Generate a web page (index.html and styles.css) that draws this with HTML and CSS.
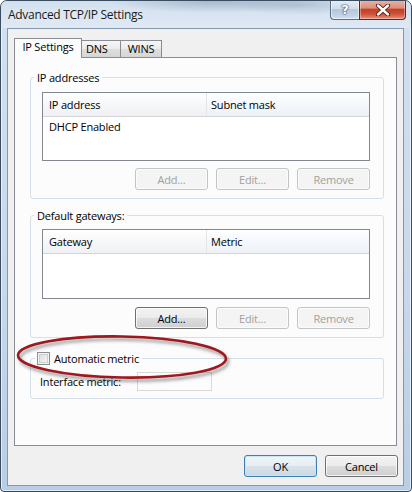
FILE: index.html
```html
<!DOCTYPE html>
<html>
<head>
<meta charset="utf-8">
<title>Advanced TCP/IP Settings</title>
<link rel="stylesheet" href="styles.css">
</head>
<body>
<div class="window">
  <div class="titlebar">
    <div class="title">Advanced TCP/IP Settings</div>
    <div class="caption-buttons">
      <div class="cap cap-help">?</div>
      <div class="cap cap-close">
        <svg class="close-icon" width="16" height="12" viewBox="0 0 16 12">
          <path d="M3 1.5 L13 10.5 M13 1.5 L3 10.5" stroke="#4b1812" stroke-width="4.2" stroke-linecap="round" fill="none"/>
          <path d="M3 1.5 L13 10.5 M13 1.5 L3 10.5" stroke="#ffffff" stroke-width="2.4" stroke-linecap="round" fill="none"/>
        </svg>
      </div>
    </div>
  </div>
  <div class="client">
    <div class="tabs">
      <div class="tab tab-selected">IP Settings</div>
      <div class="tab tab-dns">DNS</div>
      <div class="tab tab-wins">WINS</div>
    </div>
    <div class="panel">
      <div class="group group-ip">
        <div class="group-title">IP addresses</div>
        <div class="listview lv-ip">
          <div class="lv-header">
            <div class="lv-col lv-col1">IP address</div>
            <div class="lv-col lv-col2">Subnet mask</div>
          </div>
          <div class="lv-row">DHCP Enabled</div>
        </div>
        <div class="btn-row">
          <button class="btn" disabled>Add...</button>
          <button class="btn" disabled>Edit...</button>
          <button class="btn" disabled>Remove</button>
        </div>
      </div>
      <div class="group group-gw">
        <div class="group-title">Default gateways:</div>
        <div class="listview lv-gw">
          <div class="lv-header">
            <div class="lv-col lv-col1">Gateway</div>
            <div class="lv-col lv-col2">Metric</div>
          </div>
        </div>
        <div class="btn-row">
          <button class="btn">Add...</button>
          <button class="btn" disabled>Edit...</button>
          <button class="btn" disabled>Remove</button>
        </div>
      </div>
      <div class="group group-metric">
        <div class="group-title title-check">
          <span class="checkbox"></span>
          <span>Automatic metric</span>
        </div>
        <div class="metric-row">
          <span class="metric-label">Interface metric:</span>
          <span class="textbox"></span>
        </div>
      </div>
    </div>
    <div class="footer">
      <button class="btn btn-default">OK</button>
      <button class="btn">Cancel</button>
    </div>
  </div>
  <svg class="annotation" width="412" height="492" viewBox="0 0 412 492">
    <defs>
      <filter id="soft" x="-10%" y="-50%" width="120%" height="200%">
        <feGaussianBlur stdDeviation="1.4"/>
      </filter>
    </defs>
    <ellipse cx="124" cy="360" rx="104" ry="20.5" transform="rotate(1 124 360)" fill="none" stroke="rgba(60,60,60,0.45)" stroke-width="3" filter="url(#soft)"/>
    <ellipse cx="122" cy="357" rx="104" ry="20.5" transform="rotate(1 122 357)" fill="none" stroke="#a0171d" stroke-width="2.6"/>
  </svg>
</div>
</body>
</html>
```

FILE: styles.css
```css
html, body {
  margin: 0;
  padding: 0;
}

body {
  width: 412px;
  height: 492px;
  overflow: hidden;
  background: #ffffff;
  font-family: "Open Sans", "Noto Sans", sans-serif;
  font-size: 11px;
  letter-spacing: -0.2px;
  color: #000000;
}

.window {
  box-sizing: border-box;
  width: 412px;
  height: 492px;
  position: relative;
  display: flex;
  flex-direction: column;
  border: 1px solid #3a4c60;
  border-radius: 7px 7px 4px 4px;
  background: linear-gradient(180deg, #d3e1ef 0%, #c6d8eb 60%, #b8cee6 100%);
  box-shadow: inset 0 0 0 1px rgba(255, 255, 255, 0.6);
  overflow: hidden;
}

/* ---------- title bar ---------- */
.titlebar {
  height: 27px;
  flex: none;
  display: flex;
  justify-content: space-between;
  align-items: flex-start;
  background:
    radial-gradient(ellipse 110px 12px at 215px 0px, rgba(110, 135, 165, 0.45), rgba(110, 135, 165, 0)),
    radial-gradient(ellipse 70px 10px at 300px 4px, rgba(120, 145, 175, 0.35), rgba(120, 145, 175, 0)),
    linear-gradient(180deg, #d2e0ee 0%, #dfe9f4 100%);
  border-radius: 6px 6px 0 0;
}

.title {
  padding: 6px 0 0 7px;
  font-size: 12px;
  letter-spacing: -0.3px;
  line-height: 16px;
  color: #1a1a1a;
  text-shadow: 0 0 8px rgba(255, 255, 255, 0.9);
}

.caption-buttons {
  display: flex;
  margin: -1px 5px 0 0;
}

.cap {
  box-sizing: border-box;
  height: 20px;
  display: flex;
  align-items: center;
  justify-content: center;
}

.cap-help {
  width: 29px;
  border: 1px solid #5a6f86;
  border-top: none;
  border-right: none;
  border-radius: 0 0 0 4px;
  background: linear-gradient(180deg, #e6edf5 0%, #d2deea 45%, #b5c7db 50%, #c3d3e4 80%, #d4e1ee 100%);
  box-shadow: inset 0 0 0 1px rgba(255, 255, 255, 0.5);
  color: #ffffff;
  font-family: "DejaVu Sans", sans-serif;
  font-weight: bold;
  font-size: 13px;
  letter-spacing: 0;
  line-height: 18px;
  text-shadow: 0 0 1px #3b4f66, 0 0 1px #3b4f66, 0 0 2px #3b4f66;
}

.cap-close {
  width: 47px;
  border: 1px solid #5e2820;
  border-top: none;
  border-radius: 0 0 4px 0;
  background: linear-gradient(180deg, #ebb4a7 0%, #dc8f7b 42%, #c2412a 50%, #cc4e33 72%, #e5917a 100%);
  box-shadow: inset 0 0 0 1px rgba(255, 255, 255, 0.35);
}

.close-icon {
  display: block;
}

/* ---------- client area ---------- */
.client {
  flex: 1;
  margin: 0 7px 5px 6px;
  border: 1px solid #8498ae;
  background: #f0f0f0;
  display: flex;
  flex-direction: column;
}

.tabs {
  display: flex;
  align-items: flex-end;
  height: 19px;
  margin: 9px 0 0 6px;
}

.tab {
  box-sizing: border-box;
  height: 17px;
  border-top: 1px solid #898c95;
  border-right: 1px solid #898c95;
  background: linear-gradient(180deg, #f6f6f6 0%, #ebebeb 50%, #dedede 51%, #d6d6d6 100%);
  line-height: 16px;
  text-align: center;
  white-space: nowrap;
}

.tab-selected {
  position: relative;
  z-index: 1;
  width: 68px;
  height: 20px;
  margin-bottom: -1px;
  border-left: 1px solid #898c95;
  background: #fcfcfc;
  line-height: 15px;
}

.tab-dns {
  width: 39px;
  text-align: left;
  padding-left: 4px;
}

.tab-wins {
  width: 41px;
}

.panel {
  box-sizing: border-box;
  height: 389px;
  flex: none;
  margin: 0 6px;
  border: 1px solid #898c95;
  background: #fcfcfc;
  display: flex;
  flex-direction: column;
}

/* ---------- group boxes ---------- */
.group {
  margin: 0 12px 0 15px;
  border: 1px solid #d5dfe5;
  border-radius: 3px;
  padding: 0 13px 8px 11px;
}

.group-ip {
  margin-top: 19px;
}

.group-gw {
  margin-top: 16px;
}

.group-metric {
  margin-top: 20px;
  padding: 0 13px 7px 9px;
}

.group-title {
  display: flex;
  align-items: center;
  width: max-content;
  height: 15px;
  line-height: 15px;
  margin: -8px 0 0 -8px;
  padding: 0 3px;
  background: #fcfcfc;
  white-space: nowrap;
}

.title-check {
  margin-left: -5px;
  padding: 0 3px 0 2px;
}

.checkbox {
  box-sizing: border-box;
  width: 13px;
  height: 13px;
  margin-right: 4px;
  border: 1px solid #8e8f8f;
  background: linear-gradient(135deg, #dcdcdc 0%, #ececec 60%, #f8f8f8 100%);
  box-shadow: inset 0 0 0 1px #f4f4f4, inset 0 0 0 2px #cfcfcf;
}

/* ---------- list views ---------- */
.listview {
  box-sizing: border-box;
  margin-top: 7px;
  border: 1px solid #828790;
  background: #ffffff;
}

.lv-ip {
  height: 69px;
}

.lv-gw {
  height: 70px;
  margin-top: 6px;
}

.lv-header {
  box-sizing: border-box;
  display: flex;
  height: 24px;
  border-bottom: 1px solid #d5d5d5;
  background: linear-gradient(180deg, #ffffff 0%, #f6f7f9 50%, #eff1f4 100%);
}

.lv-col {
  box-sizing: border-box;
  line-height: 23px;
  white-space: nowrap;
}

.lv-col1 {
  width: 164px;
  padding-left: 6px;
  border-right: 1px solid #e3e5e8;
}

.lv-col2 {
  flex: 1;
  padding-left: 4px;
  background: linear-gradient(180deg, #ffffff 0%, #f4f7fb 50%, #eef2f7 100%);
}

.lv-row {
  padding-left: 6px;
  line-height: 19px;
}

/* ---------- buttons ---------- */
.btn-row {
  display: flex;
  justify-content: flex-end;
  gap: 8px;
  margin-top: 7px;
}

.group-gw .btn-row {
  margin-top: 8px;
}

.btn {
  box-sizing: border-box;
  width: 73px;
  height: 22px;
  padding: 0;
  margin: 0;
  font: inherit;
  letter-spacing: inherit;
  color: #000000;
  border: 1px solid #707070;
  border-radius: 3px;
  background: linear-gradient(180deg, #f3f3f3 0%, #ebebeb 50%, #dddddd 51%, #cfcfcf 100%);
  box-shadow: inset 0 0 0 1px rgba(255, 255, 255, 0.75);
}

.btn:disabled {
  color: #a0a0a0;
  border-color: #c2c5c8;
  background: #f4f4f4;
  box-shadow: inset 0 0 0 1px #fbfbfb;
}

.btn-default {
  border-color: #3c7fb1;
  background: linear-gradient(180deg, #f1f5f8 0%, #e7edf2 50%, #d8e2ea 51%, #cbd9e4 100%);
  box-shadow: inset 0 0 0 1px #c9e6f7;
}

/* ---------- metric row ---------- */
.metric-row {
  display: flex;
  align-items: center;
  margin-top: 6px;
}

.metric-label {
  width: 97px;
  line-height: 15px;
}

.textbox {
  box-sizing: border-box;
  width: 75px;
  height: 19px;
  border: 1px solid #d9d9d9;
  background: #fcfcfc;
}

/* ---------- footer ---------- */
.footer {
  display: flex;
  justify-content: flex-end;
  gap: 8px;
  margin-top: 9px;
  padding-right: 5px;
}

/* ---------- annotation overlay ---------- */
.annotation {
  position: absolute;
  left: -1px;
  top: -1px;
  pointer-events: none;
}
```
